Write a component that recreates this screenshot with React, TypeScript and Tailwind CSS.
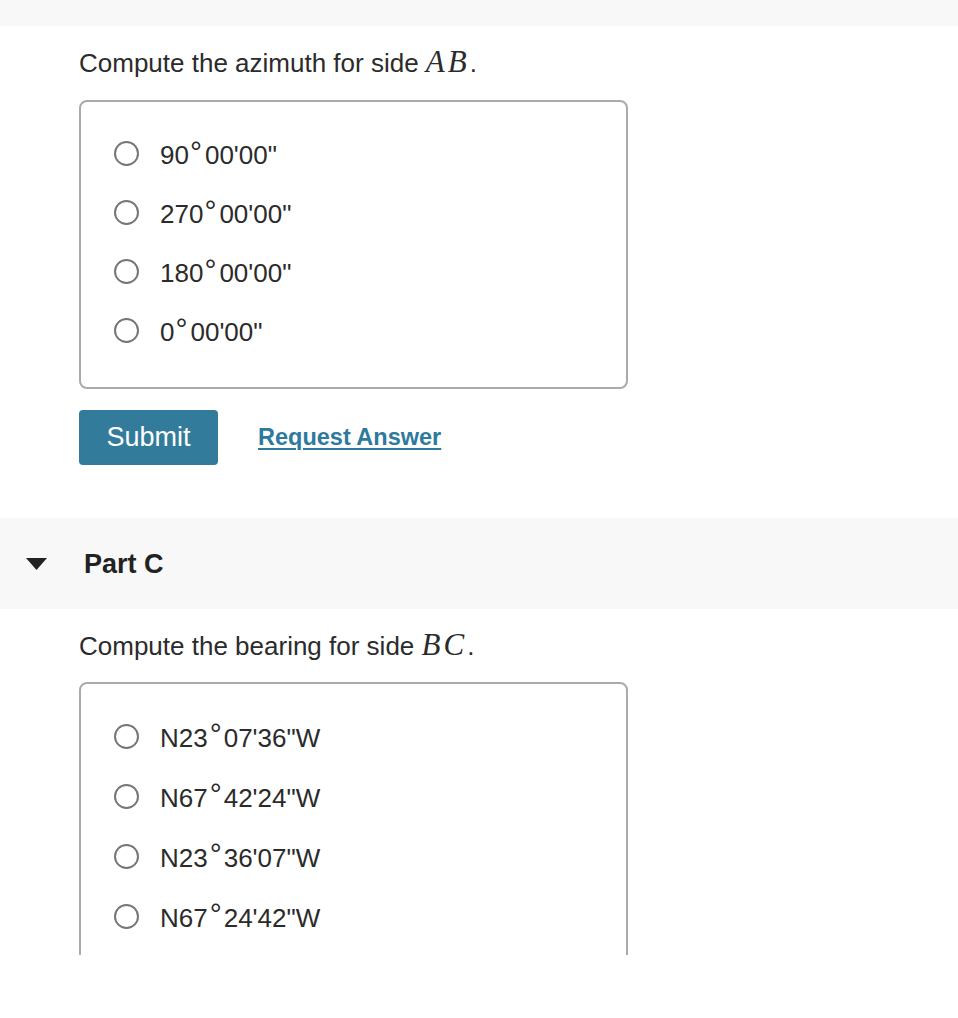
import React from "react";

function Radio() {
  return <span className="inline-block w-[25px] h-[25px] rounded-full border-2 border-[#767676] bg-white shrink-0" />;
}

function Option({ pre, post, tight }: { pre: string; post: string; tight?: boolean }) {
  return (
    <div className="flex items-center h-[59px] pl-[33px]">
      <Radio />
      <span className="ml-[21px] text-[26px] text-[#2b2b2b] leading-none">
        {pre}
        <span className={tight ? "relative top-[-2px] text-[30px] ml-[1px] mr-[3px]" : "relative top-[-3px] text-[30px] mx-[2px]"}>°</span>
        {post}
      </span>
    </div>
  );
}

const mathStyle = { fontFamily: '"Liberation Serif", "Times New Roman", serif' };

export default function App() {
  return (
    <div className="w-[958px] h-[1018px] bg-white overflow-hidden" style={{ fontFamily: '"Liberation Sans", Arial, sans-serif' }}>
      <div className="h-[955px] overflow-hidden">
        <div className="h-[26px] bg-[#f8f8f8]" />
        <div className="pl-[79px]">
          <div className="pt-[16px] h-[74px] text-[26px] text-[#2b2b2b] leading-[39px]">
            Compute the azimuth for side{" "}
            <span className="italic text-[31px] tracking-[3px]" style={mathStyle}>AB</span>.
          </div>
          <div className="w-[549px] h-[289px] border-2 border-[#aaaaaa] rounded-[8px] pt-[22px]">
            <Option pre="90" post={'00\'00"'} tight />
            <Option pre="270" post={'00\'00"'} tight />
            <Option pre="180" post={'00\'00"'} tight />
            <Option pre="0" post={'00\'00"'} tight />
          </div>
          <div className="flex items-center mt-[21px] h-[55px]">
            <button className="w-[139px] h-[55px] bg-[#327b9b] rounded-[4px] text-white text-[27px]">Submit</button>
            <a className="ml-[40px] text-[23.5px] font-bold text-[#2e7a9d] underline underline-offset-[3px] decoration-2">Request Answer</a>
          </div>
        </div>
        <div className="mt-[53px] h-[91px] bg-[#f8f8f8] flex items-center">
          <svg className="ml-[26px]" width="21" height="12" viewBox="0 0 21 12">
            <polygon points="0,0 21,0 10.5,12" fill="#222" />
          </svg>
          <span className="ml-[37px] text-[27px] font-bold text-[#222] relative top-[1px]">Part C</span>
        </div>
        <div className="pl-[79px]">
          <div className="pt-[16px] h-[73px] text-[26px] text-[#2b2b2b] leading-[39px]">
            Compute the bearing for side{" "}
            <span className="italic text-[31px] tracking-[3px]" style={mathStyle}>BC</span>.
          </div>
          <div className="w-[549px] h-[400px] border-2 border-[#aaaaaa] rounded-[8px] pt-[23px]">
            <div className="flex flex-col gap-[1px]">
              <Option pre="N23" post={'07\'36"W'} />
              <Option pre="N67" post={'42\'24"W'} />
              <Option pre="N23" post={'36\'07"W'} />
              <Option pre="N67" post={'24\'42"W'} />
            </div>
          </div>
        </div>
      </div>
    </div>
  );
}
